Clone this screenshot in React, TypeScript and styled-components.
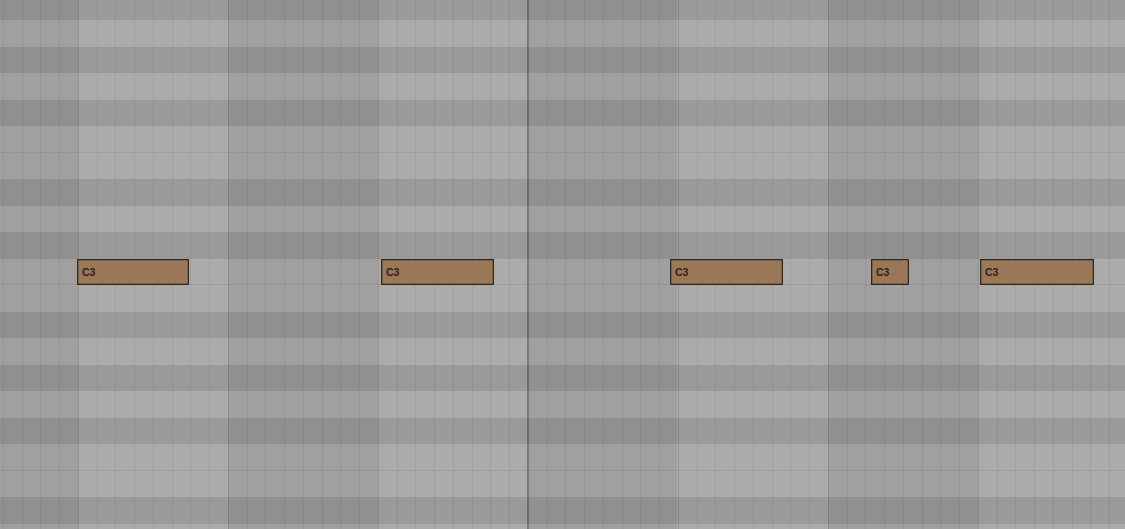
import React from "react";
import styled, { createGlobalStyle } from "styled-components";

const ROW_H = 26.5;
const BAR_W = 150;
const STEP_W = BAR_W / 8;
const GRID_TOP = -6.5;
const GRID_LEFT = -72.5;

const GlobalStyle = createGlobalStyle`
  html, body {
    margin: 0;
    padding: 0;
    background: #a4a4a4;
    overflow: hidden;
  }
  body {
    font-family: "Liberation Sans", Arial, sans-serif;
  }
`;

const Roll = styled.div`
  position: relative;
  width: 1125px;
  height: 529px;
  overflow: hidden;
  background: #a4a4a4;
`;

const KeyLanes = styled.div`
  display: flex;
  flex-direction: column;
  margin-top: ${GRID_TOP}px;
`;

const KeyLane = styled.div<{ $black: boolean; $split: boolean }>`
  height: ${ROW_H}px;
  flex: none;
  box-sizing: border-box;
  background: ${(p) => (p.$black ? "#9a9a9a" : "#ababab")};
  border-bottom: ${(p) => (p.$split ? "1px solid rgba(0,0,0,0.06)" : "none")};
`;

const BarLayer = styled.div`
  position: absolute;
  top: 0;
  bottom: 0;
  left: ${GRID_LEFT}px;
  display: flex;
  pointer-events: none;
`;

const Bar = styled.div<{ $shade: boolean; $strong: boolean }>`
  width: ${BAR_W}px;
  flex: none;
  height: 100%;
  box-sizing: border-box;
  background-color: ${(p) => (p.$shade ? "rgba(0,0,0,0.06)" : "transparent")};
  background-image: repeating-linear-gradient(
    to right,
    transparent 0,
    transparent ${STEP_W - 1}px,
    rgba(0, 0, 0, 0.065) ${STEP_W - 1}px,
    rgba(0, 0, 0, 0.065) ${STEP_W}px
  );
  border-left: ${(p) =>
    p.$strong ? "2px solid rgba(0,0,0,0.25)" : "1px solid rgba(0,0,0,0.12)"};
  margin-left: ${(p) => (p.$strong ? "-1px" : "0")};
  margin-right: ${(p) => (p.$strong ? "1px" : "0")};
`;

const Note = styled.div`
  position: absolute;
  height: 26px;
  box-sizing: border-box;
  background: #9a7757;
  border: 1px solid #2f2820;
  box-shadow: inset 0 0 0 0.5px rgba(40, 32, 24, 0.5);
  display: flex;
  align-items: center;
  padding-left: 4px;
  font-family: "Liberation Sans", Arial, sans-serif;
  font-weight: bold;
  font-size: 10.5px;
  color: #2a241e;
  letter-spacing: -0.2px;
`;

const lanes: { name: string; black: boolean }[] = [
  "A#3", "A3", "G#3", "G3", "F#3", "F3", "E3", "D#3", "D3", "C#3", "C3",
  "B2", "A#2", "A2", "G#2", "G2", "F#2", "F2", "E2", "D#2", "D2", "C#2",
].map((name) => ({ name, black: name.includes("#") }));

const notes = [
  { left: 77, width: 112 },
  { left: 381, width: 113 },
  { left: 670, width: 113 },
  { left: 871, width: 38 },
  { left: 980, width: 114 },
];

const C3_TOP = 259;

export default function App() {
  return (
    <>
      <GlobalStyle />
      <Roll>
        <KeyLanes>
          {lanes.map((l) => (
            <KeyLane
              key={l.name}
              $black={l.black}
              $split={(l.name.startsWith("F") && !l.black) || l.name === "C3"}
            />
          ))}
        </KeyLanes>
        <BarLayer>
          {Array.from({ length: 9 }, (_, i) => (
            <Bar key={i} $shade={i % 2 === 0} $strong={i === 4} />
          ))}
        </BarLayer>
        {notes.map((n, i) => (
          <Note key={i} style={{ left: n.left, width: n.width, top: C3_TOP }}>
            C3
          </Note>
        ))}
      </Roll>
    </>
  );
}
